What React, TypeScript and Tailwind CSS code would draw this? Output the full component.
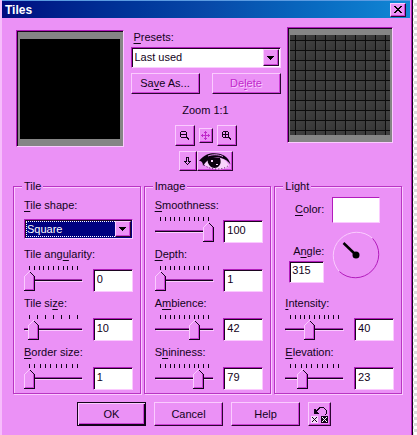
import React, { useState } from 'react';
import clsx from 'clsx';

const raised =
  'border border-t-[#fbcbff] border-l-[#fbcbff] border-r-[#2a0630] border-b-[#2a0630] bg-[#eb91f6] shadow-[inset_-1px_-1px_0_#cc3fd6]';
const sunken =
  'border border-t-[#b21cbc] border-l-[#b21cbc] border-r-[#fbcbff] border-b-[#fbcbff] shadow-[inset_1px_1px_0_#1c0420]';

// Caption with its access key underlined
const Caption = ({ text, hotkey }: { text: string; hotkey: number }) => (
  <>
    {text.slice(0, hotkey)}
    <span className="underline underline-offset-2">{text[hotkey]}</span>
    {text.slice(hotkey + 1)}
  </>
);

interface SliderFieldProps {
  id: string;
  label: string;
  hotkey: number;
  initial: number;
  min?: number;
  max?: number;
  ticks?: number;
}

const SliderField: React.FC<SliderFieldProps> = ({
  id,
  label,
  hotkey,
  initial,
  min = 0,
  max = 100,
  ticks = 11
}) => {
  const [value, setValue] = useState(initial);
  const ratio = Math.min(1, Math.max(0, (value - min) / (max - min)));
  const thumb = Math.round(ratio * 48);

  return (
    <div className="h-[49px]">
      <label htmlFor={id} className="block h-4 leading-4 whitespace-nowrap">
        <Caption text={label} hotkey={hotkey} />
      </label>
      <div className="mt-1 flex items-end justify-between">
        <div className="relative h-[26px] w-[59px]">
          <svg className="block" width="59" height="26" shapeRendering="crispEdges">
            {Array.from({ length: ticks }, (_, i) => (
              <rect key={i} x={5 + Math.round((i * 48) / (ticks - 1))} y="0" width="1" height="4" fill="#12021a" />
            ))}
            <rect x="0" y="13" width="58" height="1" fill="#a32bae" />
            <rect x="0" y="14" width="58" height="1" fill="#12021a" />
            <rect x="1" y="15" width="58" height="1" fill="#fbcbff" />
            <g transform={`translate(${thumb} 5)`}>
              <path d="M0 5h1V4h1V3h1V2h1V1h1V0h1v1h1v1h1v1h1v1h1v1h1v15H0z" fill="#eb91f6" />
              <path d="M0 5h1v14H0zM1 4h1v1H1zM2 3h1v1H2zM3 2h1v1H3zM4 1h1v1H4zM5 0h1v1H5z" fill="#fbcbff" />
              <path d="M9 5h1v14H1v-1h8z" fill="#cc3fd6" />
              <path d="M6 1h1v1H6zM7 2h1v1H7zM8 3h1v1H8zM9 4h1v1H9zM10 5h1v15H0v-1h10z" fill="#12021a" />
            </g>
          </svg>
          <input
            type="range"
            aria-label={label}
            min={min}
            max={max}
            value={value}
            onChange={(e) => setValue(Number(e.target.value))}
            className="absolute inset-0 h-full w-full opacity-0"
          />
        </div>
        <input
          id={id}
          type="text"
          value={value}
          onChange={(e) => setValue(Number(e.target.value) || 0)}
          className={clsx(sunken, 'h-[23px] w-10 bg-white px-[3px] pb-1')}
        />
      </div>
    </div>
  );
};

const Group = ({ title, children }: { title: string; children: React.ReactNode }) => (
  <fieldset className="min-w-0 flex-1 border border-[#b935c3] pr-[7px] pl-2 shadow-[1px_1px_0_#fbcbff,inset_1px_1px_0_#fbcbff]">
    <legend className="h-4 bg-[#eb91f6] px-0.5 leading-4">{title}</legend>
    <div className="pt-[3px] pl-0.5">{children}</div>
  </fieldset>
);

const Arrow = () => (
  <span className={clsx(raised, 'pointer-events-none absolute top-0.5 right-0.5 bottom-0.5 flex w-4 items-center justify-center')}>
    <svg width="7" height="4" shapeRendering="crispEdges">
      <path d="M0 0h7v1H6v1H5v1H4v1H3V3H2V2H1V1H0z" />
    </svg>
  </span>
);

const Magnifier = ({ plus }: { plus?: boolean }) => (
  <svg width="9" height="9" viewBox="0 0 9 9" shapeRendering="crispEdges" fill="#12021a">
    <path d="M1 0h5v1H1zM0 1h1v5H0zM6 1h1v5H6zM1 6h5v1H1zM6 6h2v1h1v2H8V8H7V7H6z" />
    <path d={plus ? 'M1 3h5v1H1zM3 1h1v5H3z' : 'M1 3h5v1H1z'} />
  </svg>
);

const Eye = () => (
  <svg width="32" height="17" viewBox="0 0 32 17">
    <path d="M5 12C8 6 14 4 21 5c5 1 8 5 9 8-3 3-9 4-14 3-4-1-7-2-11-4z" fill="#f9d3fc" />
    <path d="M0 8C2 5 5 3 8 1.500c5-2 12-1.500 17 1 3.500 2 5.500 5 6.500 9C29 8 26 6 22 5 15 3.500 8 6 4 13 4 10 3 8 0 8z" fill="#0c0110" />
    <path d="M9 3c5-2 11-1.500 15 .5" stroke="#eb91f6" strokeWidth="1" fill="none" />
    <path d="M9 5h12c1 3 1 6-1 8-2 2.500-7 2.500-9 0-2-2-3-5-2-8z" fill="#0c0110" />
    <path d="M12 7h2v2h-2zM17 11h2v1h-2z" fill="#f9d3fc" />
    <path d="M5 12c4 3 8 4 13 4 5 0 9-1 12-4" stroke="#5b1464" strokeWidth="1" strokeDasharray="1 2" fill="none" />
  </svg>
);

const ResetIcon = () => (
  <svg width="18" height="19" viewBox="0 0 18 19" shapeRendering="crispEdges">
    <path d="M3 4v5h5V8H7V7H6V6h1V5h1V4h1V3h4v1h1v1h1v4h-1v1h1V9h1V5h-1V4h-1V3h-1V2H8v1H7v1H6v1H5V4H4z" fill="#12021a" />
    <rect x="0" y="11" width="7" height="7" fill="#f6d9f9" />
    <path d="M1 12l5 5M6 12l-5 5" stroke="#12021a" />
    <rect x="10" y="11" width="7" height="7" fill="#12021a" />
    <path d="M11 12l5 5M16 12l-5 5" stroke="#fff" />
  </svg>
);

const footerButton = 'h-6 flex-1 text-center';

export default function App() {
  const [preset, setPreset] = useState('Last used');
  const [shape, setShape] = useState('Square');

  return (
    <div className="flex min-h-screen bg-[conic-gradient(#dcdcdc_25%,#fff_0_50%,#dcdcdc_0_75%,#fff_0)] bg-[length:6px_6px] pr-1 font-['Liberation_Sans',Arial,sans-serif] text-[11px] text-[#12021a]">
      <main className="flex min-w-0 flex-1 flex-col border-r border-l-2 border-r-[#12021a] border-l-[#f7bdfc] bg-[#eb91f6] shadow-[inset_-1px_0_0_#b21cbc]">
        {/* Title bar */}
        <header className="mr-0.5 flex h-[18px] items-center justify-between border-t border-[#5b9be2] bg-linear-to-r from-[#020a80] via-[#0848a8] to-[#1288d6] pr-1 pl-[3px]">
          <h1 className="text-xs font-bold text-white">Tiles</h1>
          <button type="button" aria-label="Close" className={clsx(raised, 'flex h-3.5 w-4 items-center justify-center')}>
            <svg width="8" height="7" shapeRendering="crispEdges">
              <path d="M0 0h2v1h1v1h2V1h1V0h2v1H7v1H6v1H5v1h1v1h1v1h1v1H6V6H5V5H3v1H2v1H0V6h1V5h1V4h1V3H2V2H1V1H0z" />
            </svg>
          </button>
        </header>

        {/* Previews and presets */}
        <section className="flex items-start justify-between pt-[9px] pr-[19px] pl-3.5">
          <div className={clsx(sunken, 'mt-[3px] bg-[#858585] px-[3px] pt-2 pb-[7px]')}>
            <div className="h-[100px] w-[100px] bg-black" />
          </div>

          <div className="flex w-[150px] flex-col items-center">
            <label htmlFor="preset" className="mt-0.5 h-4 self-start pl-[3px] leading-4">
              <Caption text="Presets:" hotkey={0} />
            </label>
            <div className="relative mt-0.5 w-full">
              <select
                id="preset"
                value={preset}
                onChange={(e) => setPreset(e.target.value)}
                className={clsx(sunken, 'block h-[21px] w-full appearance-none bg-white px-[3px]')}
              >
                <option>Last used</option>
                <option>Default</option>
              </select>
              <Arrow />
            </div>
            <div className="mt-[5px] flex w-full gap-3">
              <button type="button" className={clsx(raised, 'h-[21px] flex-1')}>
                <Caption text="Save As..." hotkey={2} />
              </button>
              <button
                type="button"
                disabled
                className={clsx(raised, 'h-[21px] flex-1 text-[#c02acb] [text-shadow:1px_1px_0_#fbcbff]')}
              >
                <Caption text="Delete" hotkey={2} />
              </button>
            </div>
            <p className="mt-2 h-4 leading-4">Zoom 1:1</p>
            <div className="mt-[7px] flex items-center gap-1">
              <button type="button" aria-label="Zoom out" className={clsx(raised, 'flex h-[21px] w-5 items-center justify-center')}>
                <Magnifier />
              </button>
              <button type="button" aria-label="Fit" className={clsx(raised, 'flex h-[15px] w-3.5 items-center justify-center')}>
                <svg width="9" height="9" className="shrink-0" shapeRendering="crispEdges" fill="#c02acb">
                  <path d="M4 0h1v1h1v1H5v2h2V3h1v1h1v1H8v1H7V5H5v2h1v1H5v1H4V8H3V7h1V5H2v1H1V5H0V4h1V3h1v1h2V2H3V1h1z" />
                </svg>
              </button>
              <button type="button" aria-label="Zoom in" className={clsx(raised, 'flex h-[21px] w-5 items-center justify-center')}>
                <Magnifier plus />
              </button>
            </div>
            <div className="mt-[5px] flex">
              <button type="button" aria-label="Options" className={clsx(raised, 'flex h-5 w-[18px] items-center justify-center')}>
                <svg width="7" height="8" shapeRendering="crispEdges" fill="#12021a">
                  <path d="M2 0h3v4h2v1H6v1H5v1H4v1H3V7H2V6H1V5H0V4h2zM3 1v4H2v1h1v1h1V6h1V5H4V1z" fillRule="evenodd" />
                </svg>
              </button>
              <button type="button" aria-label="Preview" className={clsx(raised, 'flex h-5 w-9 items-center justify-center')}>
                <Eye />
              </button>
            </div>
          </div>

          <div className={clsx(sunken, 'bg-[#858585] px-0.5 pt-[7px] pb-[7px]')}>
            <div className="h-[100px] w-[100px] bg-[linear-gradient(to_right,#0c0c0c_1px,transparent_1px),linear-gradient(#0c0c0c_1px,transparent_1px),linear-gradient(135deg,#444,#353535)] bg-size-[10px_10px] bg-position-[5px_5px]" />
          </div>
        </section>

        {/* Parameter groups */}
        <div className="mt-[7px] flex gap-[3px] pr-2.5 pl-[11px]">
          <Group title="Tile">
            <div className="h-[49px]">
              <label htmlFor="shape" className="block h-4 leading-4">
                <Caption text="Tile shape:" hotkey={0} />
              </label>
              <div className="relative mt-1.5">
                <select
                  id="shape"
                  value={shape}
                  onChange={(e) => setShape(e.target.value)}
                  className={clsx(
                    sunken,
                    'block h-5 w-full appearance-none bg-[#000080] px-0.5 text-white outline-1 -outline-offset-3 outline-dotted outline-white'
                  )}
                >
                  <option>Square</option>
                  <option>Triangle</option>
                  <option>Hexagon</option>
                </select>
                <Arrow />
              </div>
            </div>
            <SliderField id="angularity" label="Tile angularity:" hotkey={8} initial={0} />
            <SliderField id="size" label="Tile size:" hotkey={7} initial={10} min={6} max={50} ticks={7} />
            <SliderField id="border" label="Border size:" hotkey={0} initial={1} min={1} max={10} ticks={10} />
          </Group>

          <Group title="Image">
            <SliderField id="smoothness" label="Smoothness:" hotkey={0} initial={100} />
            <SliderField id="depth" label="Depth:" hotkey={0} initial={1} min={1} max={20} />
            <SliderField id="ambience" label="Ambience:" hotkey={1} initial={42} min={-100} />
            <SliderField id="shininess" label="Shininess:" hotkey={1} initial={79} />
          </Group>

          <Group title="Light">
            <div className="flex h-[98px] justify-between pr-3.5">
              <div className="flex flex-col items-end pl-1">
                <label htmlFor="color" className="mt-1 h-4 leading-4">
                  <Caption text="Color:" hotkey={0} />
                </label>
                <label htmlFor="angle" className="mt-[26px] h-4 leading-4">
                  <Caption text="Angle:" hotkey={1} />
                </label>
                <input id="angle" type="text" defaultValue="315" className={clsx(sunken, 'mt-0.5 h-[22px] w-[35px] bg-white px-0.5 pb-1')} />
              </div>
              <div className="flex flex-col gap-2">
                <button
                  id="color"
                  type="button"
                  className="h-[26px] w-12 border border-t-[#b21cbc] border-r-[#fbcbff] border-b-[#fbcbff] border-l-[#b21cbc] bg-white"
                />
                <svg width="48" height="48" viewBox="0 0 48 48" fill="none">
                  <path d="M7.400 40.600A23.500 23.500 0 0 1 40.600 7.400" stroke="#fbcbff" />
                  <path d="M40.600 7.400A23.500 23.500 0 0 1 7.400 40.600" stroke="#b21cbc" />
                  <path d="M24 24L11.500 12" stroke="#000" strokeWidth="2.500" />
                  <circle cx="24" cy="24" r="3.500" fill="#000" />
                </svg>
              </div>
            </div>
            <SliderField id="intensity" label="Intensity:" hotkey={0} initial={40} />
            <SliderField id="elevation" label="Elevation:" hotkey={0} initial={23} max={90} ticks={10} />
          </Group>
        </div>

        {/* Dialog buttons */}
        <footer className="mt-2 flex gap-2 pr-[81px] pl-[75px]">
          <button
            type="button"
            className={clsx(footerButton, 'border border-[#12021a] bg-[#eb91f6] shadow-[inset_1px_1px_0_#fbcbff,inset_-1px_-1px_0_#12021a,inset_-2px_-2px_0_#cc3fd6]')}
          >
            OK
          </button>
          <button type="button" className={clsx(raised, footerButton)}>
            Cancel
          </button>
          <button type="button" className={clsx(raised, footerButton)}>
            Help
          </button>
          <button type="button" aria-label="Reset" className={clsx(raised, 'flex h-6 w-[23px] items-center justify-center')}>
            <ResetIcon />
          </button>
        </footer>
      </main>
    </div>
  );
}
